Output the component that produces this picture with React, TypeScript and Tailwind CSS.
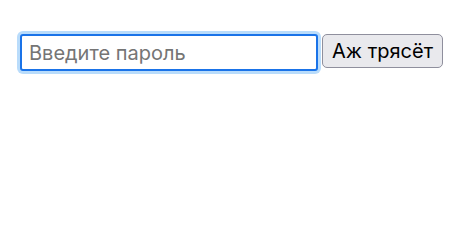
import React, { useState } from "react";

export default function App() {
  const [value, setValue] = useState("");

  return (
    <div className="min-h-screen bg-white pl-5 pt-[34px] font-['Inter','Liberation_Sans',Arial,sans-serif]">
      <div className="flex items-start gap-1">
        <input
          type="password"
          value={value}
          onChange={(e) => setValue(e.target.value)}
          placeholder="Введите пароль"
          className="h-[37px] w-[298px] rounded-[3px] border-2 border-[#1a73e8] bg-white px-[7px] text-[20px] text-black outline-none ring-[3px] ring-[#b9dcfb] placeholder:text-[#757575]"
        />
        <button
          type="button"
          className="h-[34px] w-[121px] rounded-[5px] border border-[#8f8f9d] bg-[#e9e9ed] text-[20px] text-black"
        >
          Аж трясёт
        </button>
      </div>
    </div>
  );
}
